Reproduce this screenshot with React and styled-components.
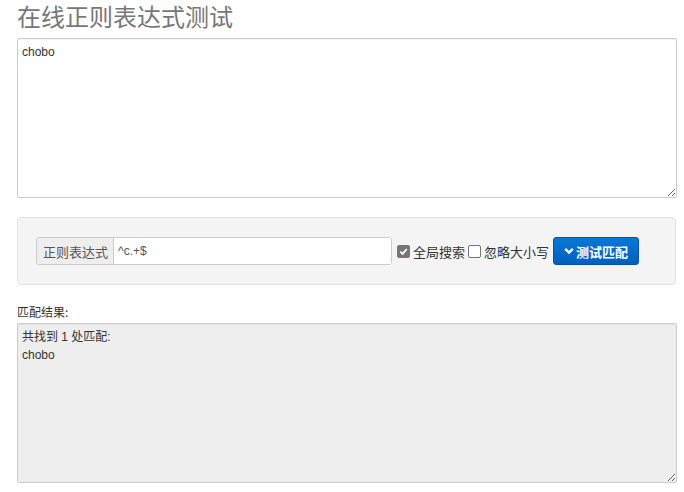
import React from "react";
import styled, { createGlobalStyle } from "styled-components";

const GlobalStyle = createGlobalStyle`
  body {
    margin: 0;
    background: #ffffff;
    font-family: "Liberation Sans", "Noto Sans CJK SC", sans-serif;
    font-size: 12px;
    color: #333333;
  }
`;

const Page = styled.div`
  width: 660px;
  margin-left: 17px;
`;

const Title = styled.h1`
  margin: 0;
  padding-top: 1px;
  height: 37px;
  line-height: 30px;
  font-size: 24px;
  font-weight: normal;
  color: #777777;
  font-family: "Noto Sans CJK SC", sans-serif;
`;

const TextArea = styled.textarea`
  display: block;
  box-sizing: border-box;
  width: 100%;
  height: 160px;
  margin: 0;
  padding: 4px 4px;
  border: 1px solid #cccccc;
  border-radius: 2px;
  background: ${(p) => (p.readOnly ? "#eeeeee" : "#ffffff")};
  color: #333333;
  font-family: "Liberation Sans", "Noto Sans CJK SC", sans-serif;
  font-size: 12px;
  line-height: 18px;
  box-shadow: inset 0 1px 1px rgba(0, 0, 0, 0.05);
  outline: none;
`;

const Well = styled.div`
  box-sizing: border-box;
  width: 659px;
  height: 68px;
  margin-top: 19px;
  padding: 19px 18px;
  background: #f4f4f4;
  border: 1px solid #e3e3e3;
  border-radius: 4px;
  display: flex;
  align-items: center;
`;

const InputGroup = styled.div`
  display: flex;
  width: 356px;
  height: 28px;
  box-sizing: border-box;
  border: 1px solid #cccccc;
  border-radius: 3px;
  overflow: hidden;
  background: #ffffff;
`;

const Addon = styled.span`
  display: flex;
  align-items: center;
  padding: 0 5px 0 6px;
  background: #eeeeee;
  border-right: 1px solid #cccccc;
  font-family: "Noto Sans CJK SC", sans-serif;
  font-size: 13px;
  color: #555555;
`;

const Input = styled.input`
  flex: 1;
  border: none;
  padding: 0 4px;
  font-family: "Liberation Sans", sans-serif;
  font-size: 12px;
  color: #555555;
  outline: none;
`;

const Option = styled.label`
  display: flex;
  align-items: center;
  margin-left: ${(p) => p.gap}px;
  font-family: "Noto Sans CJK SC", sans-serif;
  font-size: 13px;
  color: #333333;
`;

const Box = styled.span`
  display: inline-flex;
  align-items: center;
  justify-content: center;
  box-sizing: border-box;
  width: 13px;
  height: 13px;
  margin-right: 3px;
  border-radius: 2px;
  border: 1px solid #767676;
  background: ${(p) => (p.checked ? "#767676" : "#ffffff")};
`;

const Button = styled.button`
  display: flex;
  align-items: center;
  gap: 2px;
  height: 28px;
  margin-left: 4px;
  padding: 0 10px;
  border: 1px solid #0053a8;
  border-radius: 3px;
  background: linear-gradient(to bottom, #0b78d6 0%, #005fbe 100%);
  color: #ffffff;
  font-family: "Noto Sans CJK SC", sans-serif;
  font-size: 13px;
  font-weight: bold;
`;

const Label = styled.div`
  margin-top: 18px;
  height: 20px;
  line-height: 18px;
  font-family: "Noto Sans CJK SC", sans-serif;
  font-size: 12px;
  color: #333333;
`;

const Check = () => (
  <svg width="9" height="9" viewBox="0 0 10 10">
    <path d="M1.5 5.2 L4 7.6 L8.6 2.2" fill="none" stroke="#ffffff" strokeWidth="2" />
  </svg>
);

const Chevron = () => (
  <svg width="10" height="8" viewBox="0 0 10 8">
    <path d="M1.2 1.8 L5 5.6 L8.8 1.8" fill="none" stroke="#ffffff" strokeWidth="2.4" />
  </svg>
);

export default function App() {
  return (
    <Page>
      <GlobalStyle />
      <Title>在线正则表达式测试</Title>
      <TextArea defaultValue="chobo" />
      <Well>
        <InputGroup>
          <Addon>正则表达式</Addon>
          <Input defaultValue="^c.+$" />
        </InputGroup>
        <Option gap={5}>
          <Box checked>
            <Check />
          </Box>
          全局搜索
        </Option>
        <Option gap={3}>
          <Box />
          忽略大小写
        </Option>
        <Button>
          <Chevron />
          测试匹配
        </Button>
      </Well>
      <Label>匹配结果:</Label>
      <TextArea readOnly defaultValue={"共找到 1 处匹配:\nchobo"} />
    </Page>
  );
}
